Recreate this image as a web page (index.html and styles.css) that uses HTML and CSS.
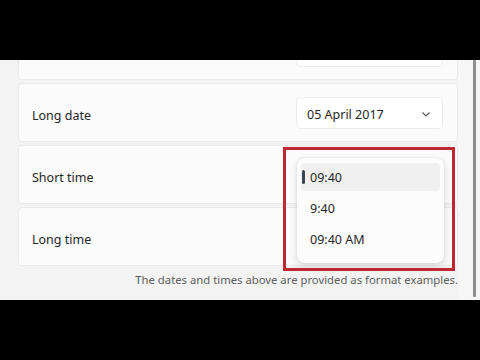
FILE: index.html
```html
<!DOCTYPE html>
<html lang="en">
<head>
  <meta charset="UTF-8">
  <title>Region format</title>
  <link rel="stylesheet" href="styles.css">
</head>
<body>
  <div class="band"></div>
  <div class="screen">
    <div class="main">
      <div class="card card-cut">
        <span></span>
        <div class="select"></div>
      </div>
      <div class="card">
        <span class="label">Long date</span>
        <div class="select"><span>05 April 2017</span><svg class="chev" viewBox="0 0 12 12"><path d="M2.5 4.5 L6 8 L9.5 4.5"/></svg></div>
      </div>
      <div class="card">
        <span class="label">Short time</span>
      </div>
      <div class="card">
        <span class="label">Long time</span>
      </div>
      <p class="note">The dates and times above are provided as format examples.</p>

      <div class="popup">
        <div class="item active"><span class="mark"></span>09:40</div>
        <div class="item">9:40</div>
        <div class="item">09:40 AM</div>
      </div>
      <div class="highlight"></div>
    </div>
    <div class="scroll"><div class="thumb"></div></div>
  </div>
  <div class="band"></div>
</body>
</html>
```

FILE: styles.css
```css
body { margin: 0; background: #000; font-family: "Noto Sans", "Open Sans", sans-serif; color: #1c1c1c; }
.band { height: 60px; background: #000; }
.screen { height: 240px; display: flex; background: #f3f3f3; }
.main { position: relative; width: 458px; padding-left: 18px; box-sizing: border-box; overflow: hidden; }
.card { height: 59px; margin-bottom: 3px; background: #fbfbfb; border: 1px solid #ebebeb; border-radius: 4px; box-sizing: border-box; display: flex; align-items: center; justify-content: space-between; padding: 0 14px 0 13px; }
.card-cut { margin-top: -39px; }
.label { font-size: 12.5px; padding-top: 5px; color: #262626; }
.select { width: 147px; height: 32px; box-sizing: border-box; background: #fff; border: 1px solid #ececec; border-radius: 4px; display: flex; align-items: center; justify-content: space-between; padding: 3px 10px 0 10px; font-size: 12.5px; color: #262626; }
.chev { width: 12px; height: 12px; fill: none; stroke: #555; stroke-width: 1.1; }
.note { margin: 6px 0 0; text-align: right; font-size: 11.3px; color: #5f5f5f; }
.popup { position: absolute; left: 297px; top: 98px; width: 147px; padding: 4px 0 8px; background: #fcfcfc; border-radius: 7px; box-shadow: 0 3px 8px rgba(0,0,0,0.14), 0 0 1px rgba(0,0,0,0.2); }
.item { position: relative; height: 31px; margin: 0 4px; padding-left: 9px; border-radius: 4px; display: flex; align-items: center; font-size: 12.5px; color: #262626; }
.item.active { background: #f0f0f0; height: 28px; margin-top: 1px; margin-bottom: 2px; }
.mark { position: absolute; left: 1px; top: 7px; width: 3px; height: 14px; border-radius: 2px; background: #3a4552; }
.highlight { position: absolute; left: 283px; top: 87px; width: 172px; height: 124px; box-sizing: border-box; border: 3px solid #c1272f; }
.scroll { flex: 1; position: relative; background: #f6f6f6; }
.thumb { position: absolute; left: 15px; top: 0; width: 3px; height: 237px; background: #8e8e8e; border-radius: 1px; }
```
